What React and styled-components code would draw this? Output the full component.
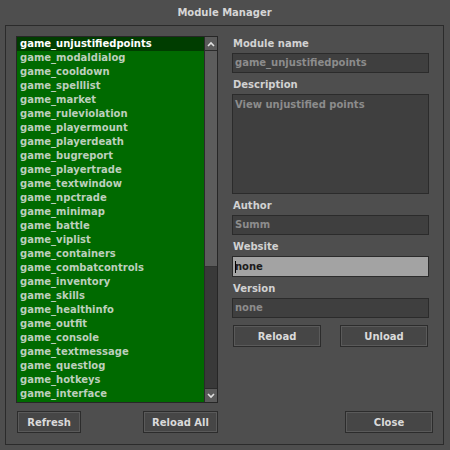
import React from "react";
import styled, { createGlobalStyle } from "styled-components";

const GlobalStyle = createGlobalStyle`
  html, body {
    margin: 0;
    padding: 0;
    background: #4d4d4d;
  }
  body {
    font-family: "DejaVu Sans", Verdana, sans-serif;
    font-size: 10px;
    font-weight: bold;
  }
`;

const Window = styled.div`
  width: 450px;
  height: 450px;
  box-sizing: border-box;
  background: #4e4e4e;
  display: flex;
  flex-direction: column;
  padding: 0 6px 5px 5px;
`;

const TitleBar = styled.div`
  height: 25px;
  display: flex;
  align-items: center;
  justify-content: center;
  color: #d6d6d6;
`;

const Panel = styled.div`
  flex: 1;
  box-sizing: border-box;
  border: 1px solid #2b2b2b;
  padding: 10px 10px 11px 10px;
  display: grid;
  grid-template-columns: 202px 201px;
  grid-template-rows: 367px 22px;
  column-gap: 14px;
  row-gap: 8px;
`;

const ListBox = styled.div`
  display: flex;
  border: 1px solid #262626;
  box-sizing: border-box;
`;

const List = styled.div`
  flex: 1;
  background: #006a00;
  overflow: hidden;
`;

const Item = styled.div`
  height: 14px;
  line-height: 14px;
  padding-left: 3px;
  white-space: nowrap;
  color: ${(p) => (p.selected ? "#ffffff" : "#bccfbc")};
  background: ${(p) => (p.selected ? "#003d00" : "transparent")};
`;

const ScrollBar = styled.div`
  width: 12px;
  display: flex;
  flex-direction: column;
  background: #393939;
  border-left: 1px solid #2a2a2a;
`;

const ArrowButton = styled.div`
  height: 13px;
  background: #5a5a5a;
  display: flex;
  align-items: center;
  justify-content: center;
  border-bottom: ${(p) => (p.top ? "1px solid #2a2a2a" : "none")};
  border-top: ${(p) => (p.top ? "none" : "1px solid #2a2a2a")};
`;

const Thumb = styled.div`
  height: 215px;
  background: #5c5c5c;
  border-bottom: 1px solid #333333;
`;

const Track = styled.div`
  flex: 1;
`;

const Fields = styled.div`
  display: flex;
  flex-direction: column;
  width: 197px;
  padding-top: 1px;
`;

const Label = styled.div`
  height: 14px;
  line-height: 14px;
  color: #d2d2d2;
  padding-left: 1px;
  margin-bottom: 2px;
`;

const Input = styled.div`
  position: relative;
  height: ${(p) => p.h || 20}px;
  box-sizing: border-box;
  border: 1px solid #2b2b2b;
  background: ${(p) => (p.active ? "#a3a3a3" : "#3f3f3f")};
  color: ${(p) => (p.active ? "#1c1c1c" : "#8c8c8c")};
  padding: ${(p) => (p.multi ? "3px 2px" : "0 2px")};
  line-height: ${(p) => (p.multi ? "14px" : `${(p.h || 20) - 2}px`)};
  margin-bottom: 5px;
  white-space: nowrap;
  overflow: hidden;
`;

const Caret = styled.span`
  position: absolute;
  left: 2px;
  top: 4px;
  width: 1px;
  height: 12px;
  background: #000000;
`;

const ButtonRow = styled.div`
  display: flex;
  justify-content: space-between;
  padding: 0 1px;
  margin-top: 2px;
`;

const BottomRow = styled.div`
  display: flex;
  justify-content: ${(p) => p.justify || "space-between"};
  padding-left: ${(p) => (p.inset ? "1px" : "0")};
`;

const Button = styled.div`
  width: ${(p) => p.w}px;
  height: 22px;
  box-sizing: border-box;
  border: 1px solid #2c2c2c;
  box-shadow: inset 0 0 0 1px #5a5a5a;
  background: #464646;
  color: #dadada;
  display: flex;
  align-items: center;
  justify-content: center;
`;

const modules = [
  "game_unjustifiedpoints",
  "game_modaldialog",
  "game_cooldown",
  "game_spelllist",
  "game_market",
  "game_ruleviolation",
  "game_playermount",
  "game_playerdeath",
  "game_bugreport",
  "game_playertrade",
  "game_textwindow",
  "game_npctrade",
  "game_minimap",
  "game_battle",
  "game_viplist",
  "game_containers",
  "game_combatcontrols",
  "game_inventory",
  "game_skills",
  "game_healthinfo",
  "game_outfit",
  "game_console",
  "game_textmessage",
  "game_questlog",
  "game_hotkeys",
  "game_interface",
];

// Small chevron for the scrollbar buttons
const Chevron = ({ up }) => (
  <svg width="8" height="6" viewBox="0 0 8 6">
    <polyline
      points={up ? "1,5 4,2 7,5" : "1,1 4,4 7,1"}
      fill="none"
      stroke="#e0e0e0"
      strokeWidth="1.6"
    />
  </svg>
);

const App = () => {
  return (
    <>
      <GlobalStyle />
      <Window>
        <TitleBar>Module Manager</TitleBar>
        <Panel>
          <ListBox>
            <List>
              {modules.map((name, i) => (
                <Item key={name} selected={i === 0}>
                  {name}
                </Item>
              ))}
            </List>
            <ScrollBar>
              <ArrowButton top>
                <Chevron up />
              </ArrowButton>
              <Thumb />
              <Track />
              <ArrowButton>
                <Chevron />
              </ArrowButton>
            </ScrollBar>
          </ListBox>

          <Fields>
            <Label>Module name</Label>
            <Input>game_unjustifiedpoints</Input>
            <Label>Description</Label>
            <Input h={100} multi>
              View unjustified points
            </Input>
            <Label>Author</Label>
            <Input>Summ</Input>
            <Label>Website</Label>
            <Input active h={21}>
              <Caret />
              none
            </Input>
            <Label>Version</Label>
            <Input>none</Input>
            <ButtonRow>
              <Button w={88}>Reload</Button>
              <Button w={88}>Unload</Button>
            </ButtonRow>
          </Fields>

          <BottomRow inset>
            <Button w={64}>Refresh</Button>
            <Button w={75}>Reload All</Button>
          </BottomRow>
          <BottomRow justify="flex-end">
            <Button w={88}>Close</Button>
          </BottomRow>
        </Panel>
      </Window>
    </>
  );
};

export default App;
